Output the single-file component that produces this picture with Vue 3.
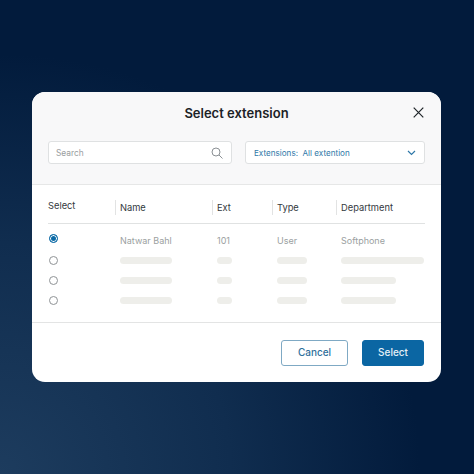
<script setup>
const rows = [
  { dept: 83 },
  { dept: 55 },
  { dept: 55 }
];
</script>

<template>
  <div class="page">
    <section class="dialog">
      <div class="top">
        <header class="head">
          <h2 class="title">Select extension</h2>
          <button class="close" aria-label="Close">
            <svg width="11" height="11" viewBox="0 0 11 11">
              <path d="M.7.7l9.6 9.6M10.3.7L.7 10.3" stroke="#1f2529" stroke-width="1.2" fill="none" />
            </svg>
          </button>
        </header>
        <div class="filters">
          <div class="field search">
            <span>Search</span>
            <svg width="12" height="12" viewBox="0 0 12 12">
              <circle cx="5" cy="5" r="4" stroke="#8b9094" stroke-width="1" fill="none" />
              <path d="M8 8l3.5 3.5" stroke="#8b9094" stroke-width="1" fill="none" />
            </svg>
          </div>
          <div class="field dropdown">
            <span>Extensions:&nbsp; All extention</span>
            <svg width="9" height="6" viewBox="0 0 9 6">
              <path d="M1 1l3.5 3.5L8 1" stroke="#2f78a8" stroke-width="1.2" fill="none" />
            </svg>
          </div>
        </div>
      </div>

      <div class="table">
        <div class="row head-row">
          <span class="first-col">Select</span>
          <span class="th">Name</span>
          <span class="th">Ext</span>
          <span class="th">Type</span>
          <span class="th">Department</span>
        </div>
        <div class="row body-row selected-row">
          <span class="radio checked"></span>
          <span class="td">Natwar Bahl</span>
          <span class="td">101</span>
          <span class="td">User</span>
          <span class="td">Softphone</span>
        </div>
        <div v-for="(row, i) in rows" :key="i" class="row body-row">
          <span class="radio"></span>
          <span class="td"><i class="bar" style="width: 52px"></i></span>
          <span class="td"><i class="bar" style="width: 15px"></i></span>
          <span class="td"><i class="bar" style="width: 30px"></i></span>
          <span class="td"><i class="bar" :style="{ width: `${row.dept}px` }"></i></span>
        </div>
      </div>

      <footer class="foot">
        <button class="btn btn-outline">Cancel</button>
        <button class="btn btn-primary">Select</button>
      </footer>
    </section>
  </div>
</template>

<style scoped>
.page {
  width: 474px;
  height: 474px;
  box-sizing: border-box;
  padding: 92px 33px 92px 32px;
  background: radial-gradient(circle 420px at 0% 100%, #1d3c5e 0%, #102d4f 55%, #021b3c 100%), #021b3c;
  font-family: Inter, "Noto Sans", sans-serif;
}

.dialog {
  height: 290px;
  border-radius: 13px;
  background: #fff;
  overflow: hidden;
  display: flex;
  flex-direction: column;
}

.top {
  height: 93px;
  flex: none;
  box-sizing: border-box;
  background: #f8f8f9;
  border-bottom: 1.5px solid #e6e7e7;
  padding: 0 16px;
}

.head {
  position: relative;
  height: 49px;
  display: flex;
  align-items: center;
  justify-content: center;
  padding-bottom: 7px;
  box-sizing: border-box;
}

.title {
  margin: 0;
  font-size: 13px;
  font-weight: 600;
  color: #1c2226;
}

.close {
  position: absolute;
  right: 1px;
  top: 15px;
  padding: 0;
  border: 0;
  background: none;
  line-height: 0;
}

.filters {
  display: flex;
  gap: 13px;
}

.field {
  height: 23px;
  box-sizing: border-box;
  background: #fff;
  border: 1px solid #dfe1e2;
  border-radius: 3px;
  display: flex;
  align-items: center;
  justify-content: space-between;
}

.search {
  width: 184px;
  padding: 0 8px 0 7px;
  font-size: 8.4px;
  color: #9a9ea1;
}

.dropdown {
  width: 180px;
  padding: 0 8px;
  font-size: 8.1px;
  color: #2f78a8;
}

.table {
  padding: 0 16px;
  flex: 1;
}

.row {
  display: grid;
  grid-template-columns: 67px 97px 60px 64px 1fr;
  align-items: center;
}

.head-row {
  height: 39px;
  box-sizing: border-box;
  padding-top: 6px;
  margin-bottom: 5px;
  border-bottom: 1px solid #e0e2e2;
  font-size: 9.3px;
  color: #33393d;
}

.first-col {
  margin-top: -3px;
}

.th {
  height: 15px;
  line-height: 15px;
  border-left: 1px solid #e2e3e3;
  padding-left: 4px;
}

.body-row {
  height: 20px;
}

.selected-row {
  height: 21px;
}

.selected-row .td {
  padding-top: 1px;
}

.td {
  padding-left: 5px;
  font-size: 9px;
  color: #9b9fa1;
  display: flex;
  align-items: center;
}

.bar {
  display: block;
  height: 7px;
  border-radius: 4px;
  background: #eeeeea;
}

.radio {
  width: 9px;
  height: 9px;
  box-sizing: border-box;
  margin-left: 1px;
  border: 1px solid #8f9396;
  border-radius: 50%;
}

.radio.checked {
  border-color: #0b6aa6;
  background: #0b6aa6;
  box-shadow: inset 0 0 0 1px #fff;
  margin-top: -2px;
}

.foot {
  height: 60px;
  flex: none;
  box-sizing: border-box;
  border-top: 1px solid #e3e4e4;
  padding: 17px 17px 0 0;
  display: flex;
  justify-content: flex-end;
  gap: 14px;
}

.btn {
  height: 26px;
  box-sizing: border-box;
  border-radius: 3px;
  font-family: inherit;
  font-size: 10px;
  font-weight: 500;
  padding: 0 0 2px;
}

.btn-outline {
  width: 67px;
  background: #fff;
  border: 1px solid #7fa9c4;
  color: #2f6f9b;
}

.btn-primary {
  width: 62px;
  background: #0b66a3;
  border: 1px solid #0b66a3;
  color: #e4f0f7;
}
</style>
